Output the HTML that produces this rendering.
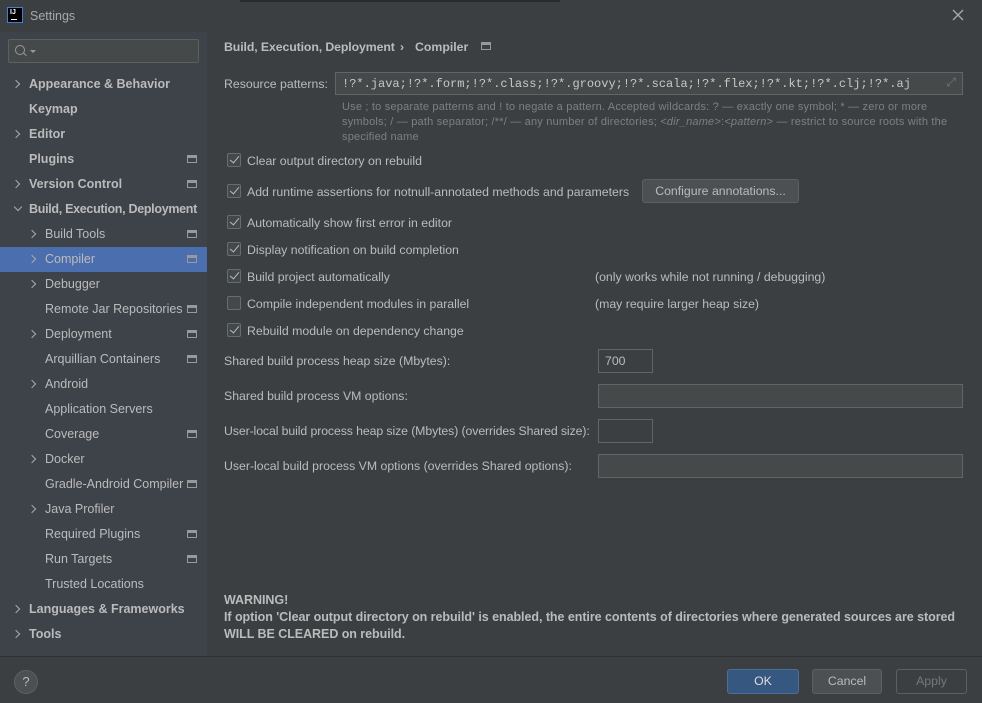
<!DOCTYPE html>
<html><head><meta charset="utf-8"><style>
*{margin:0;padding:0;box-sizing:border-box}
body{width:982px;height:703px;background:#3c3f41;font-family:"Liberation Sans",sans-serif;font-size:12.3px;color:#bbbbbb;position:relative;overflow:hidden}
.a{position:absolute;white-space:nowrap}
#title{left:0;top:0;width:982px;height:32px;background:#3c3f41}
#side{left:0;top:32px;width:207px;height:625px;background:#3e434a}
.it{position:absolute;left:0;width:207px;height:25px;line-height:25px}
.it.sel{background:#4b6eaf}
.ar{position:absolute;top:9px;width:6px;height:6px;border-right:1.3px solid #aaa;border-top:1.3px solid #aaa;transform:rotate(45deg)}
.ar.d{transform:rotate(135deg);top:7px}
.ic{position:absolute;right:10px;top:8px;width:10px;height:8px;border:1px solid #999;border-top:3px solid #999}
.cb{position:absolute;width:14px;height:14px;border:1px solid #6b6b6b;background:#43494a;border-radius:2px}
.cb.on::after{content:"";position:absolute;left:4px;top:0px;width:4px;height:8px;border-right:1.6px solid #bbb;border-bottom:1.6px solid #bbb;transform:rotate(40deg)}
.fld{position:absolute;background:#45494a;border:1px solid #646464}
.btn{position:absolute;border:1px solid #5e6060;background:#4c5052;border-radius:3px;text-align:center;color:#bbb}
</style></head><body>
<div class="a" id="title"></div>
<div class="a" style="left:7px;top:7px;width:16px;height:16px;background:#000;border:1px solid #3d7fd9"><div style="position:absolute;left:2px;top:1px;color:#fff;font-size:7px;font-weight:bold">IJ</div><div style="position:absolute;left:3px;bottom:2px;width:6px;height:1px;background:#fff"></div></div>
<div class="a" style="left:30px;top:9px;font-size:12.5px;color:#a8a8a8">Settings</div>
<svg class="a" style="left:952px;top:9px" width="12" height="12"><path d="M1 1L11 11M11 1L1 11" stroke="#aaa" stroke-width="1.3"/></svg>
<div class="a" style="left:240px;top:0;width:320px;height:2px;background:#2b2b2b"></div>
<div class="a" id="side"></div>
<div class="a" style="left:8px;top:39px;width:191px;height:24px;border:1px solid #5e6060;background:#45494a;border-radius:2px"><div style="position:absolute;left:6px;top:5px;width:10px;height:10px;border:1.3px solid #999;border-radius:50%"></div><div style="position:absolute;left:14px;top:14px;width:4px;height:1.3px;background:#999;transform:rotate(45deg)"></div><div style="position:absolute;left:21px;top:10px;border:3px solid transparent;border-top-color:#999"></div></div>
<div style="position:absolute;left:0;top:0;font-size:12.5px">
<div class="it" style="top:72px"><span class="ar" style="left:13px"></span><b style="position:absolute;left:29px">Appearance &amp; Behavior</b></div>
<div class="it" style="top:97px"><b style="position:absolute;left:29px">Keymap</b></div>
<div class="it" style="top:122px"><span class="ar" style="left:13px"></span><b style="position:absolute;left:29px">Editor</b></div>
<div class="it" style="top:147px"><b style="position:absolute;left:29px">Plugins</b><span class="ic"></span></div>
<div class="it" style="top:172px"><span class="ar" style="left:13px"></span><b style="position:absolute;left:29px">Version Control</b><span class="ic"></span></div>
<div class="it" style="top:197px"><span class="ar d" style="left:15px"></span><b style="position:absolute;left:29px;letter-spacing:-0.3px">Build, Execution, Deployment</b></div>
<div class="it" style="top:222px"><span class="ar" style="left:29px"></span><span style="position:absolute;left:45px">Build Tools</span><span class="ic"></span></div>
<div class="it sel" style="top:247px"><span class="ar" style="left:29px"></span><span style="position:absolute;left:45px">Compiler</span><span class="ic"></span></div>
<div class="it" style="top:272px"><span class="ar" style="left:29px"></span><span style="position:absolute;left:45px">Debugger</span></div>
<div class="it" style="top:297px"><span style="position:absolute;left:45px">Remote Jar Repositories</span><span class="ic"></span></div>
<div class="it" style="top:322px"><span class="ar" style="left:29px"></span><span style="position:absolute;left:45px">Deployment</span><span class="ic"></span></div>
<div class="it" style="top:347px"><span style="position:absolute;left:45px">Arquillian Containers</span><span class="ic"></span></div>
<div class="it" style="top:372px"><span class="ar" style="left:29px"></span><span style="position:absolute;left:45px">Android</span></div>
<div class="it" style="top:397px"><span style="position:absolute;left:45px">Application Servers</span></div>
<div class="it" style="top:422px"><span style="position:absolute;left:45px">Coverage</span><span class="ic"></span></div>
<div class="it" style="top:447px"><span class="ar" style="left:29px"></span><span style="position:absolute;left:45px">Docker</span></div>
<div class="it" style="top:472px"><span style="position:absolute;left:45px">Gradle-Android Compiler</span><span class="ic"></span></div>
<div class="it" style="top:497px"><span class="ar" style="left:29px"></span><span style="position:absolute;left:45px">Java Profiler</span></div>
<div class="it" style="top:522px"><span style="position:absolute;left:45px">Required Plugins</span><span class="ic"></span></div>
<div class="it" style="top:547px"><span style="position:absolute;left:45px">Run Targets</span><span class="ic"></span></div>
<div class="it" style="top:572px"><span style="position:absolute;left:45px">Trusted Locations</span></div>
<div class="it" style="top:597px"><span class="ar" style="left:13px"></span><b style="position:absolute;left:29px">Languages &amp; Frameworks</b></div>
<div class="it" style="top:622px"><span class="ar" style="left:13px"></span><b style="position:absolute;left:29px">Tools</b></div>
</div>

<div class="a" style="left:224px;top:40px;font-weight:bold;color:#bbb;letter-spacing:-0.1px">Build, Execution, Deployment</div>
<div class="a" style="left:400px;top:40px;font-weight:bold">›</div>
<div class="a" style="left:415px;top:40px;font-weight:bold">Compiler</div>
<div class="a" style="left:481px;top:42px;width:10px;height:8px;border:1px solid #999;border-top:3px solid #999"></div>

<div class="a" style="left:224px;top:77px">Resource patterns:</div>
<div class="fld" style="left:335px;top:72px;width:628px;height:23px"><span style="position:absolute;left:6px;top:4px;font-family:'Liberation Mono',monospace;font-size:12px;letter-spacing:0px;color:#c8c8c8">!?*.java;!?*.form;!?*.class;!?*.groovy;!?*.scala;!?*.flex;!?*.kt;!?*.clj;!?*.aj</span><span style="position:absolute;right:6px;top:2px;color:#777;font-size:12px">⤢</span></div>
<div class="a" style="left:342px;top:100px;font-size:11px;color:#7f7f7f;line-height:15px;white-space:normal;width:615px;letter-spacing:0.2px">Use ; to separate patterns and ! to negate a pattern. Accepted wildcards: ? — exactly one symbol; * — zero or more symbols; / — path separator; /**/ — any number of directories; <i>&lt;dir_name&gt;</i>:<i>&lt;pattern&gt;</i> — restrict to source roots with the specified name</div>

<div class="cb on" style="left:227px;top:153px"></div><div class="a" style="left:247px;top:154px">Clear output directory on rebuild</div>
<div class="cb on" style="left:227px;top:184px"></div><div class="a" style="left:247px;top:185px">Add runtime assertions for notnull-annotated methods and parameters</div>
<div class="btn" style="left:642px;top:179px;width:157px;height:24px;line-height:22px">Configure annotations...</div>
<div class="cb on" style="left:227px;top:215px"></div><div class="a" style="left:247px;top:216px">Automatically show first error in editor</div>
<div class="cb on" style="left:227px;top:242px"></div><div class="a" style="left:247px;top:243px">Display notification on build completion</div>
<div class="cb on" style="left:227px;top:269px"></div><div class="a" style="left:247px;top:270px">Build project automatically</div>
<div class="a" style="left:595px;top:270px">(only works while not running / debugging)</div>
<div class="cb" style="left:227px;top:296px"></div><div class="a" style="left:247px;top:297px">Compile independent modules in parallel</div>
<div class="a" style="left:595px;top:297px">(may require larger heap size)</div>
<div class="cb on" style="left:227px;top:323px"></div><div class="a" style="left:247px;top:324px">Rebuild module on dependency change</div>

<div class="a" style="left:224px;top:354px">Shared build process heap size (Mbytes):</div>
<div class="fld" style="left:598px;top:349px;width:55px;height:24px;background:#3c3f41"><span style="position:absolute;left:6px;top:4px">700</span></div>
<div class="a" style="left:224px;top:389px">Shared build process VM options:</div>
<div class="fld" style="left:598px;top:384px;width:365px;height:24px"></div>
<div class="a" style="left:224px;top:424px;letter-spacing:-0.1px">User-local build process heap size (Mbytes) (overrides Shared size):</div>
<div class="fld" style="left:598px;top:419px;width:55px;height:24px;background:#3c3f41"></div>
<div class="a" style="left:224px;top:459px">User-local build process VM options (overrides Shared options):</div>
<div class="fld" style="left:598px;top:454px;width:365px;height:24px"></div>

<div class="a" style="left:224px;top:592px;font-weight:bold;line-height:17px;font-size:12.5px;letter-spacing:-0.05px">WARNING!<br>If option 'Clear output directory on rebuild' is enabled, the entire contents of directories where generated sources are stored<br>WILL BE CLEARED on rebuild.</div>

<div class="a" style="left:0;top:656px;width:982px;height:1px;background:#2f3133"></div>
<div class="a" style="left:14px;top:670px;width:24px;height:24px;border:1px solid #5e6060;border-radius:50%;background:#4c5052;text-align:center;line-height:22px;font-size:13px">?</div>
<div class="btn" style="left:727px;top:669px;width:72px;height:25px;line-height:23px;background:#365880;border-color:#4a6e96;color:#ddd">OK</div>
<div class="btn" style="left:812px;top:669px;width:70px;height:25px;line-height:23px">Cancel</div>
<div class="btn" style="left:896px;top:669px;width:71px;height:25px;line-height:23px;background:#3c3f41;color:#777">Apply</div>
</body></html>
